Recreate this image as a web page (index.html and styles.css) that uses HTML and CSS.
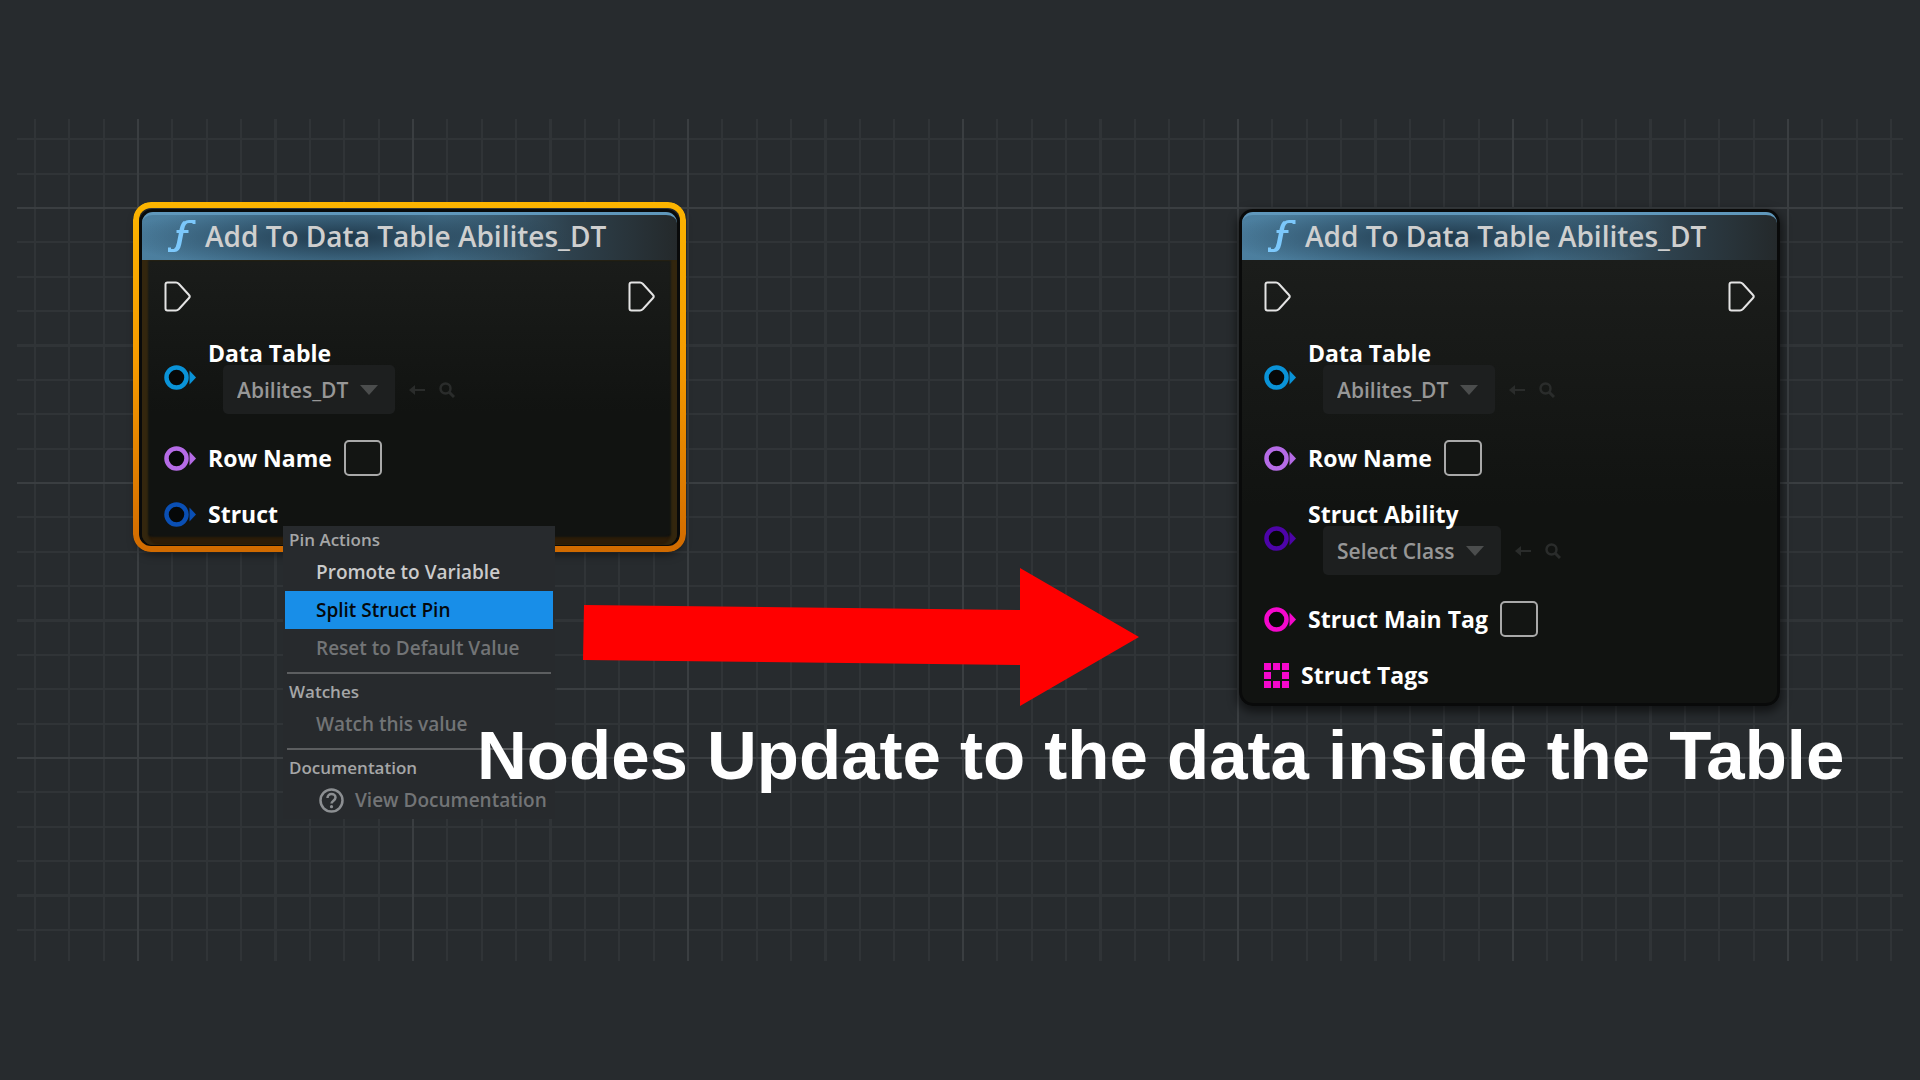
FILE: index.html
```html
<!DOCTYPE html>
<html lang="en">
<head>
<meta charset="utf-8">
<title>Blueprint Graph</title>
<link rel="stylesheet" href="styles.css">
</head>
<body>
<svg class="symbols" aria-hidden="true">
  <symbol id="fn" viewBox="0 0 29 34">
    <path d="M27 5V2.500h-5c-4 0-5.500 3-6.200 7l-3 15.500c-.8 4-2 6.500-5.300 6.500H2.500V28.500" fill="none" stroke="currentColor" stroke-width="3"/>
    <path d="M18 3c-3 2-3.400 5-4 8l-2.600 13c-.5 3-1.400 5.500-3.400 7" fill="none" stroke="currentColor" stroke-width="3"/>
    <path d="M9.500 12.500h12" stroke="currentColor" stroke-width="3"/>
  </symbol>
  <symbol id="exec" viewBox="0 0 27 31">
    <path d="M3.500 1.500h8.500c1 0 2 .5 3 1.500l10 11c1 1 1 2 0 3L15 28c-1 1-2 1.500-3 1.500H3.500c-1.400 0-2-.8-2-2v-24c0-1.200.6-2 2-2z" fill="none" stroke="#e4e4e4" stroke-width="2"/>
  </symbol>
  <symbol id="pin" viewBox="0 0 32 25">
    <path d="M25.500 5.500L32 12.500l-6.500 7z" fill="currentColor"/>
    <circle cx="12.500" cy="12.500" r="10" fill="#060808" stroke="currentColor" stroke-width="4.500"/>
  </symbol>
  <symbol id="array" viewBox="0 0 25 25">
    <path d="M0 0h7v7H0zM9 0h7v7H9zM18 0h7v7h-7zM0 9h7v7H0zM18 9h7v7h-7zM0 18h7v7H0zM9 18h7v7H9zM18 18h7v7h-7z" fill="currentColor"/>
  </symbol>
  <symbol id="caret" viewBox="0 0 18 10"><path d="M0 0h18L9 10z" fill="currentColor"/></symbol>
  <symbol id="use" viewBox="0 0 16 12">
    <path d="M16 6H3" stroke="currentColor" stroke-width="2"/>
    <path d="M0 6l6-5v10z" fill="currentColor"/>
  </symbol>
  <symbol id="browse" viewBox="0 0 16 16">
    <circle cx="6.500" cy="6.500" r="5" fill="none" stroke="currentColor" stroke-width="2.500"/>
    <path d="M10 10l5 5" stroke="currentColor" stroke-width="3"/>
  </symbol>
  <symbol id="help" viewBox="0 0 25 25">
    <circle cx="12.500" cy="12.500" r="11" fill="none" stroke="currentColor" stroke-width="2.500"/>
    <path d="M8.500 10c0-2.500 1.800-4 4-4s4 1.500 4 3.600c0 3-4 3.200-4 6" fill="none" stroke="currentColor" stroke-width="2.500"/>
    <circle cx="12.500" cy="18.700" r="1.600" fill="currentColor"/>
  </symbol>
</svg>

<main class="graph">
  <section class="node node-source selected">
    <h2 class="node-title"><svg class="fn"><use href="#fn"/></svg>Add To Data Table Abilites_DT</h2>
    <div class="node-body">
      <div class="exec-row"><svg class="exec"><use href="#exec"/></svg><svg class="exec"><use href="#exec"/></svg></div>
      <div class="pin-row tall">
        <svg class="pin object"><use href="#pin"/></svg>
        <div class="field">
          <label for="table-a">Data Table</label>
          <div class="asset">
            <div class="combo"><select id="table-a"><option>Abilites_DT</option></select><svg class="caret"><use href="#caret"/></svg></div>
            <button class="tool" aria-label="Use selected"><svg class="use"><use href="#use"/></svg></button>
            <button class="tool" aria-label="Browse"><svg class="browse"><use href="#browse"/></svg></button>
          </div>
        </div>
      </div>
      <div class="pin-row"><svg class="pin name"><use href="#pin"/></svg><label for="row-a">Row Name</label><input class="value" id="row-a" type="text"></div>
      <div class="pin-row"><svg class="pin struct"><use href="#pin"/></svg><span>Struct</span></div>
    </div>
  </section>

  <section class="node node-result">
    <h2 class="node-title"><svg class="fn"><use href="#fn"/></svg>Add To Data Table Abilites_DT</h2>
    <div class="node-body">
      <div class="exec-row"><svg class="exec"><use href="#exec"/></svg><svg class="exec"><use href="#exec"/></svg></div>
      <div class="pin-row tall">
        <svg class="pin object"><use href="#pin"/></svg>
        <div class="field">
          <label for="table-b">Data Table</label>
          <div class="asset">
            <div class="combo"><select id="table-b"><option>Abilites_DT</option></select><svg class="caret"><use href="#caret"/></svg></div>
            <button class="tool" aria-label="Use selected"><svg class="use"><use href="#use"/></svg></button>
            <button class="tool" aria-label="Browse"><svg class="browse"><use href="#browse"/></svg></button>
          </div>
        </div>
      </div>
      <div class="pin-row"><svg class="pin name"><use href="#pin"/></svg><label for="row-b">Row Name</label><input class="value" id="row-b" type="text"></div>
      <div class="pin-row tall">
        <svg class="pin class"><use href="#pin"/></svg>
        <div class="field">
          <label for="ability">Struct Ability</label>
          <div class="asset">
            <div class="combo wide"><select id="ability"><option>Select Class</option></select><svg class="caret"><use href="#caret"/></svg></div>
            <button class="tool" aria-label="Use selected"><svg class="use"><use href="#use"/></svg></button>
            <button class="tool" aria-label="Browse"><svg class="browse"><use href="#browse"/></svg></button>
          </div>
        </div>
      </div>
      <div class="pin-row"><svg class="pin string"><use href="#pin"/></svg><label for="tag">Struct Main Tag</label><input class="value" id="tag" type="text"></div>
      <div class="pin-row"><svg class="array string"><use href="#array"/></svg><span>Struct Tags</span></div>
    </div>
  </section>

  <div class="menu" role="menu">
    <h3>Pin Actions</h3>
    <button role="menuitem">Promote to Variable</button>
    <button role="menuitem" class="active">Split Struct Pin</button>
    <button role="menuitem" disabled>Reset to Default Value</button>
    <hr>
    <h3>Watches</h3>
    <button role="menuitem" disabled>Watch this value</button>
    <hr>
    <h3>Documentation</h3>
    <button role="menuitem" disabled><svg class="help"><use href="#help"/></svg>View Documentation</button>
  </div>

  <svg class="arrow" viewBox="0 0 556 138" aria-hidden="true"><path d="M1 37L437 42V0L556 69 437 138V97L0 92z" fill="#f00"/></svg>
  <h1 class="caption">Nodes Update to the data inside the Table</h1>
</main>
</body>
</html>
```

FILE: styles.css
```css
* { box-sizing: border-box; }

body {
  margin: 0;
  min-height: 100vh;
  padding: 119px 17px;
  display: flex;
  background: #272b2e;
  font-family: "Open Sans", "Noto Sans", sans-serif;
  font-weight: 600;
  color: #fff;
}

h1, h2, h3 { margin: 0; font-weight: 600; }
button, input, select { font: inherit; color: inherit; margin: 0; padding: 0; border: 0; background: none; }
svg { display: block; flex: none; }
.symbols { position: absolute; width: 0; height: 0; }

/* Graph canvas: eight minor cells to each major one */
.graph {
  position: relative;
  flex: 1;
  min-width: 0;
  background-image:
    linear-gradient(#3a3e41, #3a3e41),
    linear-gradient(to right, #3a3e41 2px, transparent 2px),
    linear-gradient(#3a3e41 2px, transparent 2px),
    repeating-linear-gradient(to right, #303437 0 2px, transparent 2px 12.5%),
    repeating-linear-gradient(#303437 0 2px, transparent 2px 12.5%);
  background-size: 530px 2px, 275px 275px, 275px 275px, 275px 275px, 275px 275px;
  background-position: 540px 569px, 120px 88px, 120px 88px, 120px 88px, 120px 88px;
  background-repeat: no-repeat, repeat, repeat, repeat, repeat;
}

/* Nodes */
.node {
  position: absolute;
  top: 90px;
  width: 541px;
  border: 3px solid #090a0a;
  border-radius: 14px;
  background: linear-gradient(#1d1f1d, #111311 60%);
  box-shadow: 0 4px 10px 2px #0008;
}
.node-source { left: 122px; }
.node-result { left: 1222px; }

.node-title {
  display: flex;
  align-items: center;
  gap: 9px;
  height: 48px;
  padding: 0 0 3px 25px;
  border-top: 3px solid #5f97bb;
  border-radius: 11px 11px 0 0;
  background:
    radial-gradient(ellipse 42% 75% at 38% 50%, #1f384a, #1f384a00),
    linear-gradient(to right, #4c7f9f, #477591 55%, #2e414d 80%, #24292b);
  color: #cfcfcf;
  font-size: 28px;
  line-height: 40px;
  white-space: nowrap;
}
.fn { width: 29px; height: 34px; color: #7cc8fb; }

.node-body {
  display: flex;
  flex-direction: column;
  gap: 20px;
  padding: 21px 22px 10px;
  border-radius: 0 0 11px 11px;
  font-size: 23px;
  font-weight: 700;
  line-height: 24px;
}
.selected::before {
  content: "";
  position: absolute;
  inset: -10px -9px -7px;
  padding: 6px;
  border-radius: 18px;
  background: linear-gradient(#fbb400, #f59b00 45%, #d06a00);
  mask: linear-gradient(#000 0 0) content-box exclude, linear-gradient(#000 0 0);
}
.selected .node-body {
  padding-bottom: 13px;
  box-shadow: inset 6px 0 2px #33260e, inset -6px 0 2px #33260e, inset 0 -8px 2px #2c1c08;
}

.exec-row { display: flex; justify-content: space-between; padding-bottom: 3px; }
.exec { width: 27px; height: 31px; }

.pin-row { display: flex; align-items: center; gap: 12px; min-height: 36px; }
.tall { margin: 6px 0; }
.pin { width: 32px; height: 25px; }
.array { width: 25px; height: 25px; }
.object { color: #0a93d8; }
.name { color: #b56be6; }
.struct { color: #0a4fb4; }
.class { color: #4d04a8; }
.string { color: #f408cc; }

.value { width: 38px; height: 36px; border: 2px solid #a9a9a9; border-radius: 5px; background: #131513; }

.field { display: flex; flex-direction: column; }
.field label { z-index: 1; }
.asset { display: flex; align-items: center; gap: 14px; padding-left: 15px; }
.combo { display: grid; align-items: center; width: 172px; height: 49px; border-radius: 5px; background: #1d1f1f; color: #979797; font-size: 21px; font-weight: 600; }
.combo.wide { width: 178px; }
.combo select { grid-area: 1 / 1; height: 49px; padding-left: 14px; appearance: none; }
.caret { grid-area: 1 / 1; justify-self: end; width: 18px; height: 10px; margin-right: 17px; color: #4b4d4d; pointer-events: none; }
.tool { color: #2a2c2b; }
.use { width: 16px; height: 12px; }
.browse { width: 16px; height: 16px; }

/* Pin context menu */
.menu {
  position: absolute;
  left: 266px;
  top: 407px;
  width: 272px;
  padding: 1px 2px 0;
  background: #272a2d;
}
.menu h3 { padding-left: 4px; color: #a5a6a7; font-size: 17px; line-height: 26px; }
.menu button {
  display: flex;
  align-items: center;
  gap: 11px;
  width: 100%;
  height: 38px;
  padding-left: 31px;
  color: #cbcbcb;
  font-size: 19px;
  line-height: 20px;
  white-space: nowrap;
}
.menu button:disabled { color: #727476; }
.menu .active { background: #188ee8; color: #05080b; }
.menu hr { height: 2px; margin: 5px 2px; border: 0; background: #5c5e60; }
.help { width: 25px; height: 25px; margin-left: 3px; color: #8c8f92; }

/* Annotations over the graph */
.arrow { position: absolute; left: 566px; top: 449px; width: 556px; height: 138px; }
.caption {
  position: absolute;
  left: 460px;
  top: 607px;
  font: bold 69px/60px "Liberation Sans", Arial, sans-serif;
  white-space: nowrap;
}
```
